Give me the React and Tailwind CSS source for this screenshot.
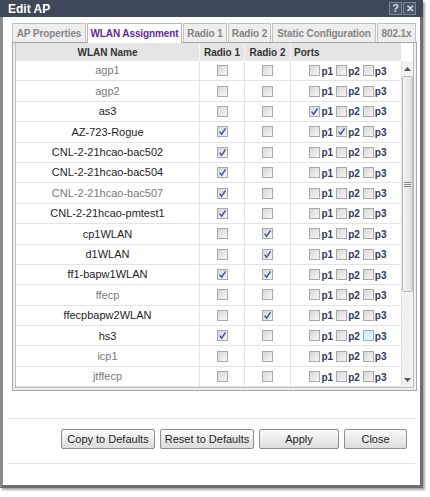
import React from "react";

const rows = [
  { name: "agp1", dim: true },
  { name: "agp2", dim: true },
  { name: "as3", p: [1, 0, 0] },
  { name: "AZ-723-Rogue", r1: true, p: [0, 1, 0] },
  { name: "CNL-2-21hcao-bac502", r1: true },
  { name: "CNL-2-21hcao-bac504", r1: true },
  { name: "CNL-2-21hcao-bac507", dim: true, r1: true },
  { name: "CNL-2-21hcao-pmtest1", r1: true },
  { name: "cp1WLAN", r2: true },
  { name: "d1WLAN", r2: true },
  { name: "ff1-bapw1WLAN", r1: true, r2: true },
  { name: "ffecp", dim: true },
  { name: "ffecpbapw2WLAN", r2: true },
  { name: "hs3", r1: true, hover: 2 },
  { name: "icp1", dim: true },
  { name: "jtffecp", dim: true },
];

function Box({ checked, hover }) {
  return (
    <span
      className={
        hover
          ? "inline-flex w-[11px] h-[11px] shrink-0 items-center justify-center border border-[#86b6e0] bg-gradient-to-br from-[#cfe6f8] to-[#e9f4fc]"
          : "inline-flex w-[11px] h-[11px] shrink-0 items-center justify-center border border-[#a9a9a9] bg-gradient-to-br from-[#d6d6d6] to-[#f7f7f7]"
      }
    >
      {checked && (
        <svg width="9" height="9" viewBox="0 0 9 9">
          <path d="M1.6 4.6 L3.6 7.2 L7.6 1.4" fill="none" stroke="#3b56a8" strokeWidth="1.5" />
        </svg>
      )}
    </span>
  );
}

const tabs = [
  { label: "AP Properties", w: "w-[74px]" },
  { label: "WLAN Assignment", w: "w-[95px]", active: true },
  { label: "Radio 1", w: "w-[44px]" },
  { label: "Radio 2", w: "w-[43px]" },
  { label: "Static Configuration", w: "w-[104px]" },
  { label: "802.1x", w: "w-[39px]" },
];

export default function App() {
  const font = { fontFamily: '"Liberation Sans",Arial,sans-serif' };
  return (
    <div className="w-[430px] h-[497px] bg-white overflow-hidden" style={font}>
      <div className="w-[423px] h-[488px] flex flex-col shadow-[2px_2px_2px_rgba(0,0,0,0.35)]">
        {/* title bar */}
        <div className="h-[17px] bg-[#3d4959] flex items-center justify-between pl-[8px] pr-[7px]">
          <span className="text-white font-bold text-[12px] leading-none">Edit AP</span>
          <div className="flex gap-[1px]">
            <span className="w-[13px] h-[13px] border border-[#7b8797] bg-[#4a5666] text-[#d8dce2] text-[11px] font-bold leading-none flex items-center justify-center">?</span>
            <span className="w-[13px] h-[13px] border border-[#7b8797] bg-[#4a5666] text-[#d8dce2] text-[10px] font-bold leading-none flex items-center justify-center">✕</span>
          </div>
        </div>
        {/* body */}
        <div className="flex-1 bg-white border-x-[3px] border-b-[3px] border-l-[#8c8c8c] border-r-[#6e6e6e] border-b-[#6e6e6e] flex flex-col">
          <div className="pt-[6px] pl-[9px] pr-[3px]">
            {/* tabs */}
            <div className="flex items-end gap-[1px] h-[19px]">
              {tabs.map((t) =>
                t.active ? (
                  <div
                    key={t.label}
                    className={`${t.w} h-[20px] -mb-[1px] relative z-10 bg-white border border-b-0 border-[#b5b5b5] flex items-center justify-center text-[10px] tracking-[-0.1px] font-bold text-[#5b2b96] whitespace-nowrap`}
                  >
                    {t.label}
                  </div>
                ) : (
                  <div
                    key={t.label}
                    className={`${t.w} h-[19px] bg-[#eeeeee] border border-b-0 border-[#c2c2c2] flex items-center justify-center text-[10px] tracking-[-0.1px] font-bold text-[#858585] whitespace-nowrap`}
                  >
                    {t.label}
                  </div>
                )
              )}
            </div>
            {/* panel */}
            <div className="border border-[#a6a6a6] bg-[#efefef] px-[2px] pb-[2px]">
              <div className="border border-t-0 border-[#bdbdbd] bg-white">
                {/* header */}
                <div className="flex h-[18px] text-[10px] font-bold text-[#333]">
                  <div className="w-[184px] bg-[#e5e5e5] border-r border-[#f4f4f4] flex items-center justify-center">WLAN Name</div>
                  <div className="w-[45px] bg-[#e5e5e5] border-r border-[#f4f4f4] flex items-center justify-center">Radio 1</div>
                  <div className="w-[46px] bg-[#e5e5e5] border-r border-[#f4f4f4] flex items-center justify-center">Radio 2</div>
                  <div className="w-[110px] bg-[#e5e5e5] flex items-center pl-[3px]">Ports</div>
                  <div className="flex-1 bg-white"></div>
                </div>
                <div className="flex">
                  <div className="w-[385px]">
                    {rows.map((r) => {
                      const p = r.p || [0, 0, 0];
                      return (
                        <div key={r.name} className="flex h-[20.4px] border-b border-[#e3e3e3] text-[11px]">
                          <div className={`w-[184px] border-r border-[#e3e3e3] flex items-center justify-center ${r.dim ? "text-[#7a7a7a]" : "text-[#1e1e1e]"}`}>
                            {r.name}
                          </div>
                          <div className="w-[45px] border-r border-[#e3e3e3] flex items-center justify-center">
                            <Box checked={r.r1} />
                          </div>
                          <div className="w-[46px] border-r border-[#e3e3e3] flex items-center justify-center">
                            <Box checked={r.r2} />
                          </div>
                          <div className="w-[110px] flex items-center justify-center gap-[3px] pl-[4px] font-bold text-[#2f3a5a] text-[10px]">
                            {[0, 1, 2].map((i) => (
                              <span key={i} className="flex items-center gap-[1px]">
                                <Box checked={p[i] === 1} hover={r.hover === i} />
                                <span className="leading-none pt-[2px]">p{i + 1}</span>
                              </span>
                            ))}
                          </div>
                        </div>
                      );
                    })}
                  </div>
                  {/* scrollbar */}
                  <div className="w-[12px] bg-[#f1f1f1] border-l border-[#e0e0e0] flex flex-col items-center">
                    <div className="h-[15px] flex items-center justify-center">
                      <svg width="7" height="4" viewBox="0 0 7 4"><polygon points="0,4 7,4 3.5,0" fill="#555" /></svg>
                    </div>
                    <div className="w-[11px] h-[216px] rounded-[2px] border border-[#b8b8b8] bg-gradient-to-r from-[#f6f6f6] to-[#dcdcdc] flex items-center justify-center">
                      <svg width="7" height="7" viewBox="0 0 7 7">
                        <path d="M0 1.5 H7 M0 3.5 H7 M0 5.5 H7" stroke="#8a8a8a" strokeWidth="1" />
                      </svg>
                    </div>
                    <div className="flex-1" />
                    <div className="h-[14px] flex items-center justify-center">
                      <svg width="7" height="4" viewBox="0 0 7 4"><polygon points="0,0 7,0 3.5,4" fill="#555" /></svg>
                    </div>
                  </div>
                </div>
              </div>
            </div>
          </div>
          {/* footer */}
          <div className="mt-[27px] mx-[5px] border-t border-[#e3e3e3]"></div>
          <div className="flex justify-end gap-[5px] pr-[13px] pt-[10px]">
            {[
              ["Copy to Defaults", "w-[94px]"],
              ["Reset to Defaults", "w-[94px]"],
              ["Apply", "w-[80px]"],
              ["Close", "w-[63px]"],
            ].map(([l, w]) => (
              <div
                key={l}
                className={`${w} h-[20px] rounded-[2px] border border-[#8e8e8e] bg-gradient-to-b from-[#fbfbfb] to-[#dcdcdc] flex items-center justify-center text-[11px] text-[#1e1e1e]`}
              >
                {l}
              </div>
            ))}
          </div>
          <div className="mt-[14px] mx-[5px] border-t border-[#e3e3e3]"></div>
        </div>
      </div>
    </div>
  );
}
